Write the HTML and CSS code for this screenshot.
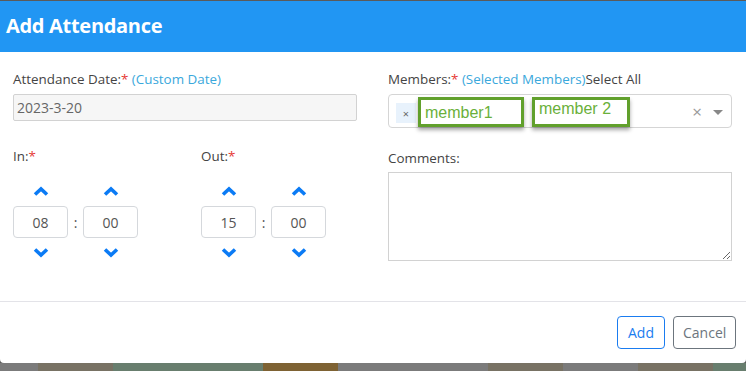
FILE: index.html
```html
<!DOCTYPE html>
<html lang="en">
<head>
    <meta charset="UTF-8">
    <title>Add Attendance</title>
    <link rel="stylesheet" href="styles.css">
</head>
<body>
    <div class="modal">
        <div class="modal-header">
            <h1>Add Attendance</h1>
        </div>
        <div class="modal-body">
            <div class="col">
                <div class="group">
                    <label class="lbl">Attendance Date:<span class="req">*</span> <a class="link">(Custom Date)</a></label>
                    <input type="text" class="date-input" value="2023-3-20" readonly>
                </div>
                <div class="times">
                    <div class="time-group">
                        <label class="lbl">In:<span class="req">*</span></label>
                        <div class="picker">
                            <div class="spin">
                                <button class="chev"><svg width="16" height="10" viewBox="0 0 16 10"><path d="M2 8.5 L8 3 L14 8.5" /></svg></button>
                                <input class="tbox" value="08">
                                <button class="chev"><svg width="16" height="10" viewBox="0 0 16 10"><path d="M2 1.5 L8 7 L14 1.5" /></svg></button>
                            </div>
                            <span class="colon">:</span>
                            <div class="spin">
                                <button class="chev"><svg width="16" height="10" viewBox="0 0 16 10"><path d="M2 8.5 L8 3 L14 8.5" /></svg></button>
                                <input class="tbox" value="00">
                                <button class="chev"><svg width="16" height="10" viewBox="0 0 16 10"><path d="M2 1.5 L8 7 L14 1.5" /></svg></button>
                            </div>
                        </div>
                    </div>
                    <div class="time-group">
                        <label class="lbl">Out:<span class="req">*</span></label>
                        <div class="picker">
                            <div class="spin">
                                <button class="chev"><svg width="16" height="10" viewBox="0 0 16 10"><path d="M2 8.5 L8 3 L14 8.5" /></svg></button>
                                <input class="tbox" value="15">
                                <button class="chev"><svg width="16" height="10" viewBox="0 0 16 10"><path d="M2 1.5 L8 7 L14 1.5" /></svg></button>
                            </div>
                            <span class="colon">:</span>
                            <div class="spin">
                                <button class="chev"><svg width="16" height="10" viewBox="0 0 16 10"><path d="M2 8.5 L8 3 L14 8.5" /></svg></button>
                                <input class="tbox" value="00">
                                <button class="chev"><svg width="16" height="10" viewBox="0 0 16 10"><path d="M2 1.5 L8 7 L14 1.5" /></svg></button>
                            </div>
                        </div>
                    </div>
                </div>
            </div>
            <div class="col">
                <div class="group">
                    <label class="lbl">Members:<span class="req">*</span> <a class="link">(Selected Members)</a>Select All</label>
                    <div class="select">
                        <span class="tag">×</span>
                        <span class="mark mark-1">member1</span>
                        <span class="mark mark-2">member 2</span>
                        <span class="sel-clear">×</span>
                        <span class="caret"></span>
                    </div>
                </div>
                <div class="group comments">
                    <label class="lbl">Comments:</label>
                    <textarea class="area"></textarea>
                </div>
            </div>
        </div>
        <div class="modal-footer">
            <button class="btn btn-add">Add</button>
            <button class="btn btn-cancel">Cancel</button>
        </div>
    </div>
    <div class="backdrop">
        <span class="tile t-gray s-38"></span>
        <span class="tile t-brown"></span>
        <span class="tile t-green"></span>
        <span class="tile t-green"></span>
        <span class="tile t-orange"></span>
        <span class="tile t-gray"></span>
        <span class="tile t-gray"></span>
        <span class="tile t-brown"></span>
        <span class="tile t-gray"></span>
        <span class="tile t-brown"></span>
        <span class="tile t-green"></span>
    </div>
</body>
</html>
```

FILE: styles.css
```css
* {
    box-sizing: border-box;
}
body {
    margin: 0;
    background: #5a5a5a;
    font-family: "Open Sans", "Noto Sans", sans-serif;
    overflow: hidden;
}
.modal {
    margin-top: 1px;
    background: #fff;
    border-radius: 0 0 4px 4px;
}
.modal-header {
    background: #2196f3;
    height: 51px;
    padding: 0 6px;
    display: flex;
    align-items: center;
}
.modal-header h1 {
    margin: 0 0 3px;
    color: #fff;
    font-size: 20px;
    font-weight: 700;
    letter-spacing: -0.3px;
}
.modal-body {
    display: grid;
    grid-template-columns: 344px 344px;
    column-gap: 31px;
    padding: 18px 14px 0 13px;
    height: 250px;
    border-bottom: 1px solid #e3e3e8;
}
.col {
    display: flex;
    flex-direction: column;
}
.lbl {
    display: block;
    font-size: 13.4px;
    line-height: 18px;
    color: #444;
    margin-bottom: 6px;
}
.req {
    color: #e53935;
}
.link {
    color: #3aa8dc;
}
.date-input {
    width: 100%;
    height: 27px;
    border: 1px solid #d2d2d2;
    border-radius: 2px;
    background: #f6f6f6;
    padding: 0 3px;
    font: 14px "Open Sans", sans-serif;
    color: #666;
}
.times {
    display: flex;
    margin-top: 26px;
}
.time-group {
    flex: none;
    width: 188px;
}
.time-group .lbl {
    margin-bottom: 16px;
}
.picker {
    display: flex;
    align-items: center;
}
.spin {
    display: flex;
    flex-direction: column;
    align-items: center;
    gap: 5px;
}
.chev {
    border: 0;
    background: none;
    padding: 0;
    width: 20px;
    height: 20px;
    display: flex;
    align-items: center;
    justify-content: center;
}
.chev path {
    fill: none;
    stroke: #0b7bf5;
    stroke-width: 3.6;
}
.tbox {
    width: 55px;
    height: 32px;
    border: 1px solid #d5d8dc;
    border-radius: 4px;
    text-align: center;
    font: 14px "Open Sans", sans-serif;
    color: #555;
}
.colon {
    width: 15px;
    text-align: center;
    font-size: 14px;
    color: #555;
}
.select {
    height: 34px;
    border: 1px solid #d5d5d5;
    border-radius: 4px;
    display: flex;
    align-items: center;
    padding: 0 8px 0 7px;
}
.tag {
    background: #e8f2fc;
    color: #666;
    font-size: 11px;
    width: 20px;
    height: 20px;
    display: flex;
    align-items: center;
    justify-content: center;
    margin-top: 4px;
}
.mark {
    height: 30px;
    border: 3px solid #61a02c;
    background: #fff;
    color: #6ab03a;
    font-family: "Liberation Sans", Arial, sans-serif;
    font-size: 16px;
    box-shadow: 0 3px 4px rgba(0, 0, 0, 0.35);
    padding: 0 4px;
    margin-top: 2px;
}
.mark-1 {
    width: 106px;
    margin-left: 2px;
    line-height: 26px;
}
.mark-2 {
    width: 98px;
    margin-left: 8px;
    line-height: 18px;
}
.sel-clear {
    margin-left: auto;
    color: #999;
    font-size: 17px;
}
.caret {
    margin-left: 11px;
    border-left: 5px solid transparent;
    border-right: 5px solid transparent;
    border-top: 5px solid #888;
    margin-top: 3px;
}
.comments {
    margin-top: 21px;
}
.comments .lbl {
    margin-bottom: 5px;
}
.area {
    display: block;
    width: 100%;
    height: 89px;
    border: 1px solid #d2d2d2;
    border-radius: 0;
    resize: vertical;
}
.modal-footer {
    display: flex;
    justify-content: flex-end;
    gap: 8px;
    padding: 14px 10px 14px;
}
.btn {
    height: 33px;
    background: #fff;
    border-radius: 4px;
    font: 14px "Open Sans", sans-serif;
    padding: 0 9px;
}
.btn-add {
    border: 1px solid #1a7cf0;
    color: #1a7cf0;
    width: 48px;
}
.btn-cancel {
    border: 1px solid #6c757d;
    color: #6c757d;
    width: 63px;
}
.backdrop {
    display: flex;
    height: 10px;
    overflow: hidden;
}
.tile {
    width: 75px;
    flex: none;
}
.s-38 {
    width: 38px;
}
.t-gray {
    background: #7b7b7b;
}
.t-brown {
    background: #787264;
}
.t-green {
    background: #687e6e;
}
.t-orange {
    background: #7e6233;
}
```
